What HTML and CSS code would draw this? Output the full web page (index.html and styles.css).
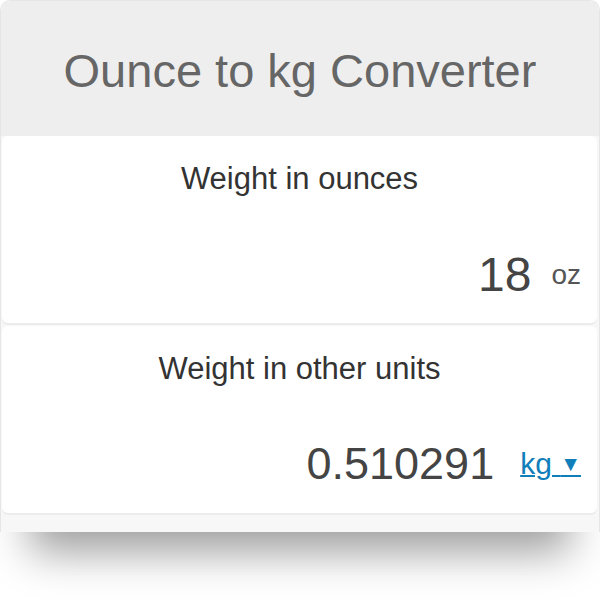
FILE: index.html
```html
<!DOCTYPE html>
<html lang="en">
<head>
    <meta charset="UTF-8">
    <title>Ounce to kg Converter</title>
    <link rel="stylesheet" href="styles.css">
</head>
<body>
    <div class="calc">
        <div class="calc-header">
            <h1>Ounce to kg Converter</h1>
        </div>
        <div class="calc-card">
            <div class="calc-label">Weight in ounces</div>
            <div class="calc-row">
                <span class="calc-value">18</span>
                <span class="calc-unit">oz</span>
            </div>
        </div>
        <div class="calc-card">
            <div class="calc-label">Weight in other units</div>
            <div class="calc-row">
                <span class="calc-value calc-value-small">0.510291</span>
                <a class="calc-unit-link" href="#">kg <span class="arrow">▼</span></a>
            </div>
        </div>
    </div>
</body>
</html>
```

FILE: styles.css
```css
html, body{
    margin: 0;
    padding: 0;
    height: 100%;
    overflow: hidden;
    background: #ffffff;
    font-family: "Liberation Sans", Arial, sans-serif;
}

.calc{
    height: 532px;
    box-sizing: border-box;
    background-color: #f7f7f7;
    border: 1px solid #e6e6e6;
    border-bottom: none;
    border-radius: 10px 10px 0 0;
    box-shadow: 0 50px 40px -30px rgba(0, 0, 0, 0.38);
}

.calc-header{
    background-color: #eeeeee;
    border-radius: 10px 10px 0 0;
    padding: 42px 0 37px;
    text-align: center;
}

.calc-header h1{
    margin: 0;
    font-size: 47px;
    font-weight: normal;
    line-height: 1.2;
    color: #666666;
}

.calc-card{
    background-color: #ffffff;
    margin: 0 2px 3px 1px;
    padding: 25px 16px 20px;
    border-radius: 6px;
    box-shadow: 0 2px 0 #ececec;
}

.calc-label{
    font-size: 31px;
    line-height: 36px;
    color: #333333;
    text-align: center;
    margin-bottom: 48px;
}

.calc-row{
    height: 58px;
    display: flex;
    justify-content: flex-end;
    align-items: center;
    gap: 20px;
}

.calc-value{
    font-size: 48px;
    line-height: 1.2;
    color: #444444;
}

.calc-value-small{
    font-size: 45px;
}

.calc-unit{
    font-size: 28px;
    line-height: 1.2;
    color: #555555;
}

.calc-unit-link{
    margin-left: 6px;
    font-size: 30px;
    line-height: 1.2;
    color: #107eb9;
    text-decoration: underline;
    text-decoration-thickness: 2px;
    text-underline-offset: 1px;
}

.calc-unit-link .arrow{
    font-size: 21px;
    vertical-align: 3px;
}
```
